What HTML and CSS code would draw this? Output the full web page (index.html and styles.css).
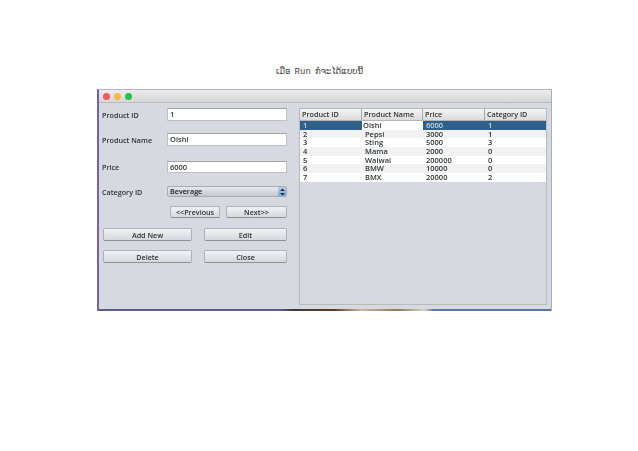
FILE: index.html
```html
<!DOCTYPE html>
<html lang="lo">
<head>
<meta charset="utf-8">
<title>Product form</title>
<link rel="stylesheet" href="styles.css">
</head>
<body>
<p class="caption">ເມື່ອ <span class="latin">Run</span> ກໍ່ຈະໄດ້ແບບນີ້</p>
<div class="window">
  <div class="titlebar">
    <span class="light red"></span>
    <span class="light yellow"></span>
    <span class="light green"></span>
  </div>
  <div class="content">
    <div class="form">
      <div class="field field-id"><label class="label">Product ID</label><div class="input">1</div></div>
      <div class="field field-name"><label class="label">Product Name</label><div class="input">Oishi</div></div>
      <div class="field field-price"><label class="label">Price</label><div class="input">6000</div></div>
      <div class="field field-cat"><label class="label">Category ID</label>
        <div class="combo"><span class="combo-text">Beverage</span>
          <span class="combo-arrow"><svg width="7" height="8" viewBox="0 0 7 8"><path d="M3.5 0.5 L6 3 H1 Z M1 5 H6 L3.5 7.5 Z" fill="#123a5c"/></svg></span>
        </div>
      </div>
      <div class="nav-row"><div class="btn btn-prev">&lt;&lt;Previous</div><div class="btn btn-next">Next&gt;&gt;</div></div>
      <div class="action-row"><div class="btn btn-wide">Add New</div><div class="btn btn-narrow">Edit</div></div>
      <div class="action-row action-last"><div class="btn btn-wide">Delete</div><div class="btn btn-narrow">Close</div></div>
    </div>
    <div class="table-panel">
      <div class="thead">
        <div class="th">Product ID</div><div class="th">Product Name</div><div class="th">Price</div><div class="th">Category ID</div>
      </div>
      <div class="row selected"><div class="td">1</div><div class="td editing">Oishi</div><div class="td">6000</div><div class="td">1</div></div>
      <div class="row alt"><div class="td">2</div><div class="td">Pepsi</div><div class="td">3000</div><div class="td">1</div></div>
      <div class="row"><div class="td">3</div><div class="td">Sting</div><div class="td">5000</div><div class="td">3</div></div>
      <div class="row alt"><div class="td">4</div><div class="td">Mama</div><div class="td">2000</div><div class="td">0</div></div>
      <div class="row"><div class="td">5</div><div class="td">Waiwai</div><div class="td">200000</div><div class="td">0</div></div>
      <div class="row alt"><div class="td">6</div><div class="td">BMW</div><div class="td">10000</div><div class="td">0</div></div>
      <div class="row"><div class="td">7</div><div class="td">BMX</div><div class="td">20000</div><div class="td">2</div></div>
    </div>
  </div>
  <div class="strip"></div>
</div>
</body>
</html>
```

FILE: styles.css
```css
* { box-sizing: border-box; }
html, body { margin: 0; padding: 0; background: #fff; }
body { width: 638px; height: 451px; overflow: hidden; font-family: "Open Sans", "Liberation Sans", sans-serif; }

.caption {
  margin: 0;
  padding: 64px 0 0 1px;
  height: 89px;
  text-align: center;
  font: 8.5px/14px "DejaVu Serif", "DejaVu Sans", serif;
  color: #444;
  word-spacing: 1.5px;
}
.latin { font-family: "Liberation Mono", monospace; font-size: 9px; }

.window {
  margin-left: 97px;
  width: 455px;
  height: 222px;
  display: flex;
  flex-direction: column;
  background: #d6d9e0;
  border-left: 2px solid #7a62a8;
  border-top: 1px solid #b9b0d2;
  border-right: 1px solid #a9adc4;
  filter: blur(0.35px);
}
.titlebar {
  height: 13px;
  flex: none;
  display: flex;
  align-items: center;
  gap: 4px;
  padding-left: 4px;
  background: linear-gradient(#ececec, #d6d6d6);
  border-bottom: 1px solid #bcbcbf;
}
.light { width: 7px; height: 7px; border-radius: 50%; }
.red { background: #f4575a; }
.yellow { background: #f6b73d; }
.green { background: #1fc64c; }

.content { flex: 1; display: flex; min-height: 0; }

.form { width: 200px; flex: none; padding: 5px 0 0 3px; color: #333; }
.field { display: flex; align-items: center; }
.field-id { height: 13px; }
.field-name { height: 13px; margin-top: 12px; }
.field-price { height: 12px; margin-top: 15px; }
.field-cat { height: 11px; margin-top: 13px; }
.label { width: 65px; flex: none; font-weight: 600; color: #333; font-size: 7.2px; }
.input {
  width: 120px;
  height: 100%;
  padding-left: 2px;
  line-height: 11px;
  background: #fff;
  border: 1px solid #c0c0c4;
  border-top-color: #a3a3a6;
  color: #333;
  font-size: 7.5px;
  font-weight: 600;
}
.combo {
  width: 120px;
  height: 100%;
  display: flex;
  justify-content: space-between;
  background: linear-gradient(#e7e9ee, #c4c8d0);
  border: 1px solid #a9acb3;
  border-radius: 2px;
  font-size: 7.2px;
  font-weight: 600;
  line-height: 9px;
}
.combo-text { padding-left: 2px; color: #222; }
.combo-arrow {
  width: 8px;
  display: flex;
  align-items: center;
  justify-content: center;
  background: linear-gradient(#b7cfe8, #7fa6cc);
}
.nav-row { display: flex; gap: 6px; margin: 9px 0 0 68px; }
.action-row { display: flex; gap: 12px; margin-top: 10px; padding-left: 1px; }
.action-last { margin-top: 9px; }
.btn {
  height: 13px;
  display: flex;
  align-items: center;
  justify-content: center;
  background: linear-gradient(#f1f2f4, #d6d8dd);
  border: 1px solid #b0b2b8;
  border-bottom-color: #8f9196;
  border-radius: 2px;
  color: #333;
  font-size: 7.2px;
  font-weight: 600;
}
.btn-prev { width: 50px; height: 12px; }
.btn-next { width: 61px; height: 12px; }
.btn-wide { width: 89px; }
.btn-narrow { width: 83px; }

.table-panel {
  width: 248px;
  height: 197px;
  margin-top: 5px;
  border: 1px solid #b8bac0;
  background: #d6d9e0;
  font-size: 7.2px;
  color: #333;
}
.thead, .row { display: grid; grid-template-columns: 62px 61px 62px 61px; }
.thead {
  height: 12px;
  background: linear-gradient(#f4f4f4, #dcdcdc);
  border-bottom: 1px solid #b6b6b6;
}
.th { padding-left: 2px; line-height: 11px; border-right: 1px solid #a8a8a8; font-weight: 600; }
.th:last-child { border-right: 0; }
.row { height: 8.7px; line-height: 8.7px; background: #fff; }
.row.alt { background: #f1f2f4; }
.td { padding-left: 3px; font-size: 7.5px; font-weight: 600; }
.row.selected { background: #2f6089; color: #c9d8e6; }
.td.editing { background: #fff; color: #333; padding-left: 1px; line-height: 8.7px; }

.strip {
  height: 2px;
  flex: none;
  background: linear-gradient(90deg, #5a5f8a 0 40%, #3f3a3a 43%, #5c3a22 52%, #c7b8a8 58%, #8a7a60 66%, #d7d0c0 72%, #5d78a8 74%, #5d78a8 100%);
}
```
